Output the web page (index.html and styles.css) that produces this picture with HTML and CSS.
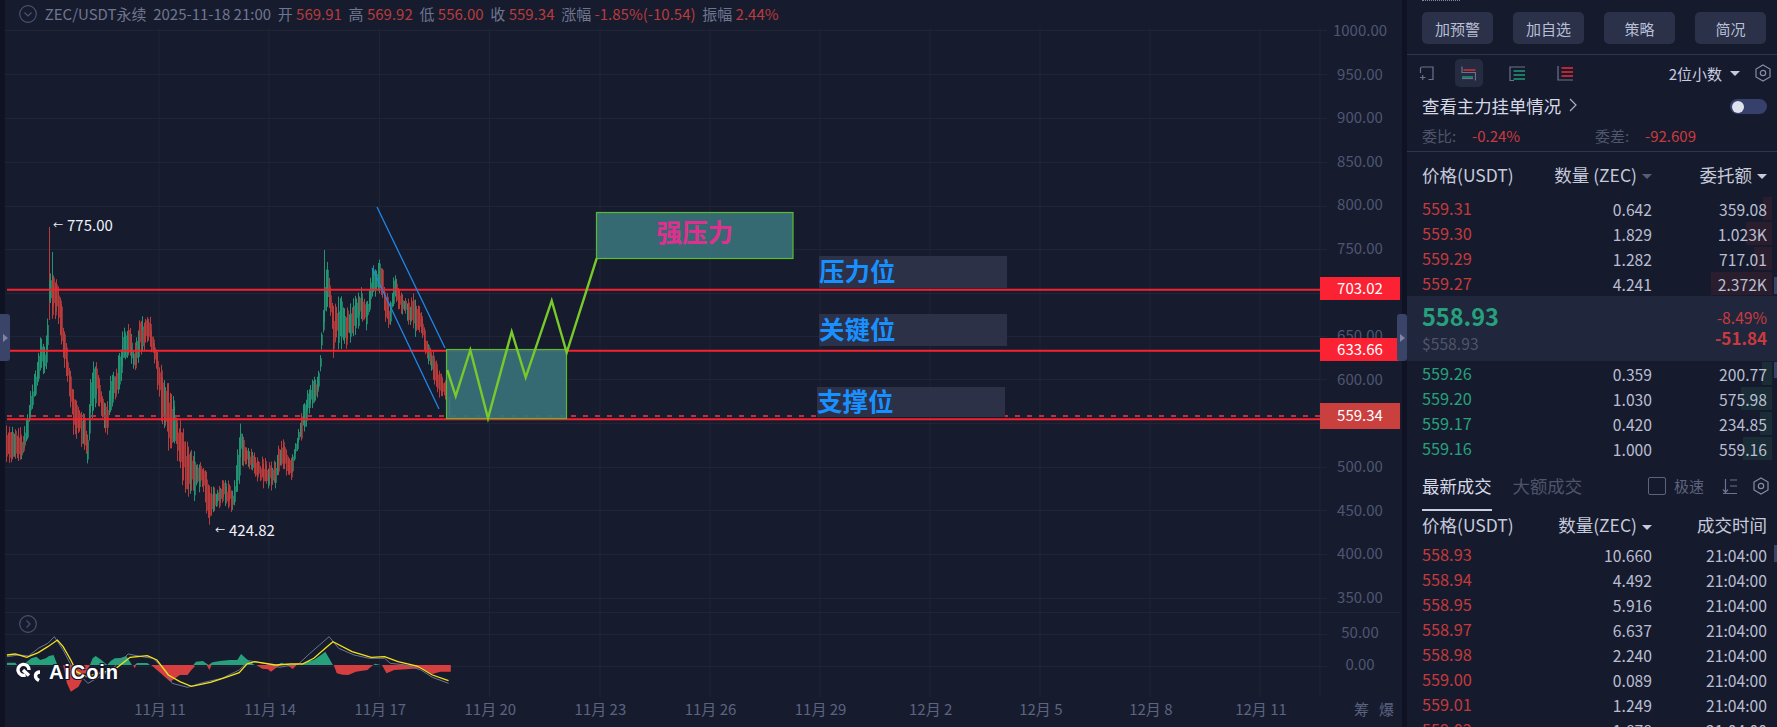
FILE: index.html
```html
<!DOCTYPE html>
<html lang="zh">
<head>
<meta charset="utf-8">
<title>ZEC/USDT永续</title>
<link rel="stylesheet" href="styles.css">
</head>
<body>
<main class="chart">
  <div class="plot">
    <svg class="canvas" viewBox="5 0 1397 697" width="1397" height="697">
      <g class="grid">
        <path d="M159 28V697M269 28V697M379.500 28V697M489.500 28V697M600 28V697M710 28V697M820 28V697M930 28V697M1040 28V697M1150 28V697M1260 28V697M1320 28V697"/>
        <path d="M5 30.500H1327M5 74.500H1327M5 118.500H1327M5 162.500H1327M5 206.500H1327M5 249.500H1327M5 293.500H1327M5 336.500H1327M5 379.500H1327M5 423.500H1327M5 467.500H1327M5 510.500H1327M5 554.500H1327M5 598.500H1327M5 612.500H1400M5 634.500H1327M5 666.500H1327M5 697.500H1400"/>
      </g>
      <path id="wick-up" class="wick-up"/>
      <path id="wick-down" class="wick-down"/>
      <path id="body-up" class="body-up"/>
      <path id="body-down" class="body-down"/>
      <path class="last-candle" d="M449.500 397V417"/>
      <path class="level-dash" d="M7 416H1320"/>
      <path class="level" d="M7 289.700H1320M10 350.700H1320M7 419.300H1320"/>
      <path class="trend" d="M377 207L445 348M372 268L439 409"/>
      <rect class="zone" x="446.500" y="349.500" width="120" height="69"/>
      <rect class="zone" x="596.500" y="212.500" width="196.500" height="46"/>
      <polyline class="path-line" points="447.300,370 455.700,396 470.300,350 488,418.300 511.700,331.700 525.700,377.300 551.700,300.700 566.700,352.700 596.700,258.300"/>
      <g transform="translate(0 590) scale(.3827 .3333)">
        <polygon class="hist-up" points="18,225 18,218 40,218 45,225 60,225 70,215 82,205 95,200 105,210 120,205 128,198 140,195 150,225"/>
        <polygon class="hist-up" points="235,225 242,205 250,198 265,210 280,225 290,212 300,205 315,204 330,198 345,225"/>
        <polygon class="hist-up" points="352,225 358,219 385,219 392,225"/>
        <polygon class="hist-up" points="505,225 512,215 530,213 545,225 555,217 575,213 600,210 620,210 630,192 642,205 650,212 665,225"/>
        <polygon class="hist-up" points="725,225 735,218 750,225"/>
        <polygon class="hist-up" points="785,225 805,214 820,210 835,198 850,185 860,205 870,225"/>
        <polygon class="hist-up" points="975,225 980,221 995,225"/>
        <polygon class="hist-down" points="165,225 175,280 185,305 205,290 220,258 235,225"/>
        <polygon class="hist-down" points="348,225 352,235 356,225"/>
        <polygon class="hist-down" points="395,225 420,250 445,275 470,255 490,255 500,240 510,228 505,225"/>
        <polygon class="hist-down" points="540,225 547,240 553,225"/>
        <polygon class="hist-down" points="670,225 685,236 700,238 708,245 720,235 735,225"/>
        <polygon class="hist-down" points="750,225 765,237 775,225"/>
        <polygon class="hist-down" points="872,225 880,250 895,254 910,255 930,245 960,240 975,225"/>
        <polygon class="hist-down" points="998,225 1010,250 1030,240 1060,238 1100,235 1130,252 1150,245 1178,245 1178,225"/>
        <polyline class="dif" vector-effect="non-scaling-stroke" points="18,200 50,195 75,198 100,175 125,160 142,140 165,180 190,235 230,280 290,240 335,192 370,200 400,205 430,240 450,280 490,292 530,278 580,265 625,240 650,212 700,222 730,232 780,222 810,190 835,165 860,140 885,175 925,195 965,205 1005,205 1020,220 1060,225 1100,240 1130,262 1172,280"/>
        <polyline class="dea" vector-effect="non-scaling-stroke" points="18,195 40,192 70,202 100,188 125,170 150,150 165,170 185,210 200,245 225,260 300,238 340,202 385,197 410,210 440,255 470,275 500,289 550,277 590,262 625,248 645,222 665,215 720,225 760,222 790,222 820,205 850,175 870,155 920,185 970,202 1005,200 1040,215 1090,228 1130,255 1172,272"/>
      </g>
      <path class="tick" d="M1320 415.700H1327"/>
    </svg>

    <div class="legend">
      <svg class="round-btn" width="18" height="18" viewBox="0 0 18 18"><circle cx="9" cy="9" r="8.300"/><path d="M5.500 7.500L9 11L12.500 7.500"/></svg>
      <span class="sym">ZEC/USDT永续</span>
      <span class="sym">2025-11-18 21:00</span>
      <span class="pair">开 <b>569.91</b></span>
      <span class="pair">高 <b>569.92</b></span>
      <span class="pair">低 <b>556.00</b></span>
      <span class="pair">收 <b>559.34</b></span>
      <span class="pair">涨幅 <b>-1.85%(-10.54)</b></span>
      <span class="pair">振幅 <b>2.44%</b></span>
    </div>

    <div class="yaxis">
      <span>1000.00</span><span>950.00</span><span>900.00</span><span>850.00</span><span>800.00</span><span>750.00</span><span>700.00</span><span>650.00</span><span>600.00</span><span>550.00</span><span>500.00</span><span>450.00</span><span>400.00</span><span>350.00</span>
      <span class="sub sub-first">50.00</span><span class="sub">0.00</span>
    </div>

    <div class="extreme extreme-high"><i>←</i>775.00</div>
    <div class="extreme extreme-low"><i>←</i>424.82</div>

    <div class="note note-strong">强压力</div>
    <div class="tag tag-press">压力位</div>
    <div class="tag tag-key">关键位</div>
    <div class="tag tag-support">支撑位</div>

    <div class="price-tag tag-703">703.02</div>
    <div class="price-tag tag-633">633.66</div>
    <div class="price-tag tag-559">559.34</div>

    <div class="handle handle-left"><i></i></div>
    <div class="handle handle-right"><i></i></div>

    <svg class="round-btn expand" width="18" height="18" viewBox="0 0 18 18"><circle cx="9" cy="9" r="8.300"/><path d="M7.500 5.500L11 9L7.500 12.500"/></svg>

    <div class="logo">
      <svg width="26" height="20" viewBox="0 0 26 20"><path class="logo-ring" d="M9.500 13A5.500 5.500 0 1 1 13 8"/><path class="logo-ring" d="M7 8L13 13.500"/><path class="logo-ring" d="M24 10C19 10 17.500 15.500 23 18.500"/></svg>
      <span>AiCoin</span>
    </div>
  </div>
  <div class="dates">
    <span>11月 11</span><span>11月 14</span><span>11月 17</span><span>11月 20</span><span>11月 23</span><span>11月 26</span><span>11月 29</span><span>12月 2</span><span>12月 5</span><span>12月 8</span><span>12月 11</span>
    <div class="date-tools"><em>筹</em><em>爆</em></div>
  </div>
</main>

<aside class="panel">
  <div class="stub"><i></i></div>
  <div class="actions">
    <button>加预警</button><button>加自选</button><button>策略</button><button>简况</button>
  </div>
  <div class="toolbar">
    <span class="tool"><svg width="15" height="15" viewBox="0 0 15 15"><path class="ic" d="M1.500 7V2.500Q1.500 1 3 1H14V13.500H9.500"/><path class="ic" d="M1 11.500H6.500M3.700 9V14"/></svg></span>
    <span class="tool tool-on"><svg width="15" height="15" viewBox="0 0 15 15"><path class="ic" d="M1 .5V6.500H14.500V14.500"/><path class="ic-red" d="M2.500 4H14.500"/><path class="ic" d="M1 12.500H12"/><path class="ic-green" d="M1 11H12"/></svg></span>
    <span class="tool"><svg width="16" height="15" viewBox="0 0 16 15"><path class="ic" d="M16 1H1V14.500H5"/><path class="ic-green" d="M4.500 5H16M4.500 9H16M4.500 13H16"/></svg></span>
    <span class="tool"><svg width="16" height="15" viewBox="0 0 16 15"><path class="ic" d="M1 0V14H16"/><path class="ic-red" d="M4.500 2H16M4.500 6H16M4.500 10H16"/></svg></span>
    <span class="decimals">2位小数<i class="caret caret-light"></i></span>
    <svg class="hex" width="16" height="18" viewBox="0 0 16 18"><path d="M8 1L15 5V13L8 17L1 13V5Z"/><circle cx="8" cy="9" r="2.700"/></svg>
  </div>
  <div class="mainforce">
    <span>查看主力挂单情况</span>
    <svg class="chev" width="8" height="14" viewBox="0 0 8 14"><path d="M1 1L7 7L1 13"/></svg>
    <span class="toggle"><i></i></span>
  </div>
  <div class="ratio">
    <span class="ratio-a">委比:</span><b class="ratio-av">-0.24%</b>
    <span class="ratio-b">委差:</span><b class="ratio-bv">-92.609</b>
  </div>

  <div class="row head book-head">
    <span>价格(USDT)</span>
    <span class="num">数量 (ZEC)<i class="caret"></i></span>
    <span class="num">委托额<i class="caret caret-light"></i></span>
  </div>
  <div class="row ask"><i class="depth" style="width:9px"></i><span>559.31</span><span class="num">0.642</span><span class="num">359.08</span></div>
  <div class="row ask"><i class="depth" style="width:26px"></i><span>559.30</span><span class="num">1.829</span><span class="num">1.023K</span></div>
  <div class="row ask"><i class="depth" style="width:18px"></i><span>559.29</span><span class="num">1.282</span><span class="num">717.01</span></div>
  <div class="row ask"><i class="depth" style="width:61px"></i><span>559.27</span><span class="num">4.241</span><span class="num">2.372K</span></div>

  <div class="mid">
    <div class="mid-left"><strong>558.93</strong><small>$558.93</small></div>
    <div class="mid-right"><span>-8.49%</span><strong>-51.84</strong></div>
  </div>

  <div class="row bid"><i class="depth" style="width:10px"></i><span>559.26</span><span class="num">0.359</span><span class="num">200.77</span></div>
  <div class="row bid"><i class="depth" style="width:31px"></i><span>559.20</span><span class="num">1.030</span><span class="num">575.98</span></div>
  <div class="row bid"><i class="depth" style="width:12px"></i><span>559.17</span><span class="num">0.420</span><span class="num">234.85</span></div>
  <div class="row bid"><i class="depth" style="width:29px"></i><span>559.16</span><span class="num">1.000</span><span class="num">559.16</span></div>

  <div class="tabs">
    <span class="tab tab-on">最新成交</span>
    <span class="tab">大额成交</span>
    <span class="check"></span>
    <span class="speed">极速</span>
    <svg class="sort" width="16" height="16" viewBox="0 0 16 16"><path d="M3.500 1V14M1 11.500L3.500 14.500L6 11.500M8 2H15M8 8H15M1 15.500H15"/></svg>
    <svg class="hex" width="16" height="18" viewBox="0 0 16 18"><path d="M8 1L15 5V13L8 17L1 13V5Z"/><circle cx="8" cy="9" r="2.700"/></svg>
  </div>

  <div class="row head trade-head">
    <span>价格(USDT)</span>
    <span class="num">数量(ZEC)<i class="caret caret-light"></i></span>
    <span class="num">成交时间</span>
  </div>
  <div class="row ask"><span>558.93</span><span class="num">10.660</span><span class="num">21:04:00</span></div>
  <div class="row ask"><span>558.94</span><span class="num">4.492</span><span class="num">21:04:00</span></div>
  <div class="row ask"><span>558.95</span><span class="num">5.916</span><span class="num">21:04:00</span></div>
  <div class="row ask"><span>558.97</span><span class="num">6.637</span><span class="num">21:04:00</span></div>
  <div class="row ask"><span>558.98</span><span class="num">2.240</span><span class="num">21:04:00</span></div>
  <div class="row ask"><span>559.00</span><span class="num">0.089</span><span class="num">21:04:00</span></div>
  <div class="row ask"><span>559.01</span><span class="num">1.249</span><span class="num">21:04:00</span></div>
  <div class="row ask"><span>559.02</span><span class="num">1.878</span><span class="num">21:04:00</span></div>

  <i class="thumb thumb-a"></i><i class="thumb thumb-b"></i><i class="thumb thumb-c"></i>
</aside>
<script src="chart.js"></script>
</body>
</html>
```
FILE: styles.css
```css
* { box-sizing: border-box; }
html, body { margin: 0; height: 100%; }
body {
  display: flex;
  width: 1777px;
  height: 727px;
  overflow: hidden;
  background: #0f1222;
  color: #b9bed1;
  font-family: "Noto Sans CJK SC", "Noto Sans", sans-serif;
  font-size: 15px;
}

/* chart */
.chart {
  width: 1397px;
  margin: 0 5px 0 5px;
  display: flex;
  flex-direction: column;
  background: #171b2e;
}
.plot {
  position: relative;
  height: 697px;
  display: flex;
  justify-content: flex-end;
}
.canvas { position: absolute; left: 0; top: 0; }
.grid path { fill: none; stroke: #1f2437; stroke-width: 1; }
.wick-up, .wick-down { fill: none; stroke-width: 1; }
.body-up, .body-down { fill: none; stroke-width: 1.500; }
.wick-up, .body-up { stroke: #239473; }
.wick-down, .body-down { stroke: #b93c3c; }
.last-candle { stroke: #9aa0ad; stroke-width: 1.5; fill: none; }
.level { stroke: #f8222f; stroke-width: 2; fill: none; }
.level-dash { stroke: #b5333c; stroke-width: 2; stroke-dasharray: 5 7; fill: none; }
.trend { stroke: #1f87e6; stroke-width: 1.3; fill: none; }
.zone { fill: #39717a; fill-opacity: .92; stroke: #58bd2e; stroke-width: 1.2; }
.path-line { fill: none; stroke: #78c92a; stroke-width: 2.4; }
.hist-up { fill: #26a17b; }
.hist-down { fill: #d63f3f; }
.dif { fill: none; stroke: #6b7490; stroke-width: 1; }
.dea { fill: none; stroke: #f3e31a; stroke-width: 1.3; }
.tick { stroke: #fff; stroke-width: 1.5; }

.legend {
  position: absolute;
  left: 14px;
  top: 5px;
  display: flex;
  align-items: center;
  gap: 6.700px;
  height: 18px;
  font-size: 15px;
  line-height: 18px;
  color: #6f7690;
  white-space: nowrap;
}
.legend b { font-weight: 400; color: #b83c3c; }
.legend .round-btn { margin-right: 1px; }
.round-btn circle, .round-btn path { fill: none; stroke: #4b5270; stroke-width: 1.2; }

.yaxis {
  width: 82px;
  padding: 8px 2px 0 0;
  display: flex;
  flex-direction: column;
  color: #4e5672;
  font-size: 15px;
  text-align: center;
  position: relative;
}
.yaxis span { height: 43.600px; line-height: 43.600px; }
.yaxis .sub { height: 32px; line-height: 32px; }
.yaxis .sub-first { margin-top: -2px; }

.extreme { position: absolute; color: #f0f2f8; font-size: 15px; line-height: 18px; white-space: nowrap; display: flex; align-items: center; }
.extreme i { font-style: normal; font-size: 10px; width: 14px; }
.extreme-high { left: 48px; top: 216px; }
.extreme-low { left: 210px; top: 521px; }

.note, .tag { position: absolute; font-weight: 700; font-size: 25.500px; white-space: nowrap; }
.note { left: 591.500px; top: 215px; width: 196.500px; text-align: center; color: #e0308f; line-height: 32px; }
.tag { height: 32px; width: 188px; background: #2c3147; color: #1890ff; line-height: 28px; }
.tag-press { left: 814px; top: 256px; }
.tag-key { left: 814px; top: 314px; }
.tag-support { left: 812px; top: 387px; height: 30px; line-height: 26px; }

.price-tag {
  position: absolute;
  left: 1315px;
  width: 80px;
  height: 23px;
  line-height: 21px;
  text-align: center;
  color: #fff;
  font-size: 15px;
  background: #fb2233;
}
.tag-703 { top: 277px; }
.tag-633 { top: 338px; }
.tag-559 { top: 403px; height: 26px; line-height: 23px; background: #c9403f; }

.handle {
  position: absolute;
  top: 314px;
  width: 10px;
  height: 47px;
  background: #3a4468;
  display: flex;
  align-items: center;
  justify-content: center;
}
.handle i {
  width: 0; height: 0;
  border-left: 5px solid #7d86a6;
  border-top: 4.500px solid transparent;
  border-bottom: 4.500px solid transparent;
}
.handle-left { left: -5px; border-radius: 0 3px 3px 0; }
.handle-right { left: 1392px; border-radius: 3px; z-index: 2; }

.expand { position: absolute; left: 14px; top: 615px; }

.logo {
  position: absolute;
  left: 11px;
  top: 660px;
  display: flex;
  align-items: center;
  gap: 7px;
  height: 24px;
}
.logo svg { filter: drop-shadow(0 0 1px #14172a); }
.logo span {
  font-family: "Liberation Sans", sans-serif;
  font-weight: 700;
  font-size: 20px;
  color: #fff;
  letter-spacing: .9px;
  text-shadow: -1px -1px 0 #14172a, 1px -1px 0 #14172a, -1px 1px 0 #14172a, 1px 1px 0 #14172a;
}
.logo-ring { fill: none; stroke: #fff; stroke-width: 3.400; }

.dates {
  height: 30px;
  display: flex;
  align-items: center;
  padding: 0 0 7px 100px;
  color: #5b6480;
  font-size: 15px;
}
.dates > span { width: 110.100px; text-align: center; white-space: nowrap; }
.date-tools { margin-left: auto; display: flex; gap: 10px; padding-right: 8px; }
.date-tools em { font-style: normal; }

/* side panel */
.panel {
  position: relative;
  width: 370px;
  height: 727px;
  overflow: hidden;
  background: #161a2d;
  flex: none;
}
.stub { height: 12px; padding-left: 15px; }
.stub i { display: block; width: 38px; border-top: 1px dotted #7f86a0; }
.actions {
  height: 43px;
  display: flex;
  gap: 20px;
  padding: 0 10px 0 15px;
  border-bottom: 1px solid #2f3550;
}
.actions button {
  width: 71px;
  height: 32px;
  padding: 0;
  border: 0;
  border-radius: 5px;
  background: #2a3148;
  color: #b8bfd6;
  font: inherit;
  font-size: 15px;
}
.toolbar {
  margin-top: 4px;
  height: 28px;
  display: flex;
  align-items: center;
  padding: 0 6px 0 5px;
}
.tool { width: 28px; height: 28px; display: flex; align-items: center; justify-content: center; border-radius: 5px; margin-right: 20px; }
.tool:first-child { margin-right: 14.500px; }
.tool-on { background: #252b40; }
.ic { fill: none; stroke: #6b7290; stroke-width: 1.2; }
.ic-red { fill: none; stroke: #ef2d36; stroke-width: 1.4; }
.ic-green { fill: none; stroke: #1f9c74; stroke-width: 1.4; }
.decimals { margin-left: auto; margin-right: 15px; color: #c8cde0; font-size: 15px; white-space: nowrap; display: flex; align-items: center; }
.caret {
  display: inline-block;
  width: 0; height: 0;
  margin-left: 5px;
  vertical-align: middle;
  border-left: 5px solid transparent;
  border-right: 5px solid transparent;
  border-top: 5px solid #565d78;
}
.caret-light { border-top-color: #c5cadb; }
.decimals .caret { margin-left: 8px; }
.hex path, .hex circle { fill: none; stroke: #868da8; stroke-width: 1.2; }

.mainforce {
  height: 36px;
  display: flex;
  align-items: center;
  padding: 0 10px 0 15px;
  color: #d5d9e6;
  font-size: 17.400px;
}
.chev { margin-left: 8px; }
.chev path { fill: none; stroke: #aab0c6; stroke-width: 1.2; }
.toggle { margin: 3px 0 0 auto; width: 37px; height: 15px; border-radius: 8px; background: #36406a; padding: 1.500px 0 0 2px; }
.toggle i { display: block; width: 12px; height: 12px; border-radius: 50%; background: #dfe2ec; }
.ratio {
  height: 29px;
  padding: 0 0 3px 15px;
  display: flex;
  align-items: center;
  border-bottom: 1px solid #2f3550;
  color: #4f556c;
  font-size: 15px;
}
.ratio b { font-weight: 400; color: #c93a3f; }
.ratio-a { width: 50px; }
.ratio-av { width: 123px; }
.ratio-b { width: 50px; }

.row {
  position: relative;
  display: grid;
  grid-template-columns: 115px 115px 115px;
  align-items: center;
  height: 25px;
  padding-left: 15px;
  font-size: 15.700px;
  white-space: nowrap;
}
.row span { position: relative; }
.num { text-align: right; }
.ask > span:first-of-type, .bid > span:first-of-type { font-size: 16.300px; margin-bottom: 2px; }
.ask > span:first-of-type { color: #c23a3c; }
.bid > span:first-of-type { color: #26a17b; }
.depth { position: absolute; right: 5px; top: 1px; bottom: 1px; }
.ask .depth { background: #2a1e2e; }
.bid .depth { background: #1a2d36; }
.head { color: #c5cadb; font-size: 17.500px; }
.book-head { height: 44px; }
.trade-head { height: 31px; padding-bottom: 4px; }

.mid {
  height: 65px;
  display: flex;
  justify-content: space-between;
  padding: 0 10px 0 15px;
  background: #20263b;
}
.mid-left strong { display: block; color: #26a17b; font-size: 23.500px; font-weight: 700; line-height: 28px; margin-top: 6px; }
.mid-left small { display: block; color: #4f556c; font-size: 15.700px; line-height: 22px; margin-top: 3px; }
.mid-right { text-align: right; color: #c93a3f; }
.mid-right span { display: block; font-size: 15.700px; line-height: 22px; margin-top: 11px; }
.mid-right strong { display: block; font-size: 17px; line-height: 24px; font-weight: 700; margin-top: -3px; }

.tabs {
  height: 50px;
  display: flex;
  align-items: flex-start;
  padding: 13px 8px 0 15px;
  font-size: 17.400px;
  line-height: 24px;
}
.tab { height: 37px; color: #4f556c; white-space: nowrap; margin-right: 21px; }
.tab-on { color: #d5d9e6; border-bottom: 2px solid #c9cfe0; }
.check { margin: 3px 8px 0 auto; width: 18px; height: 18px; border: 1px solid #5d637d; border-radius: 2px; }
.speed { color: #5d637d; font-size: 15px; }
.sort { margin: 4px 0 0 18px; }
.sort path { fill: none; stroke: #6b7290; stroke-width: 1.2; }
.tabs .hex { margin: 3px 0 0 15px; }

.thumb { position: absolute; right: 0; width: 3px; background: #3a4468; }
.thumb-a { top: 277px; height: 17px; }
.thumb-b { top: 362px; height: 16px; }
.thumb-c { top: 545px; height: 17px; }
```
FILE: chart.js
```js
// Draws the price candles from an envelope of [x, high, low] read off the chart.
(function () {
  var env = [[18,620,720],[40,615,730],[70,640,710],[85,560,640],[100,470,540],[122,310,460],[128,350,490],[140,350,450],[147,130,300],[158,130,290],[175,190,310],[190,320,430],[205,430,520],[220,510,650],[240,560,660],[262,600,770],[272,420,600],[290,430,570],[305,520,620],[318,560,655],[332,450,560],[350,430,550],[365,330,490],[382,300,410],[400,360,460],[420,295,400],[442,255,380],[465,370,430],[485,440,640],[505,500,690],[525,530,720],[550,630,810],[580,700,840],[605,720,800],[630,790,935],[650,800,870],[670,770,850],[700,790,880],[720,615,760],[745,680,750],[780,715,790],[820,720,815],[845,650,740],[870,720,780],[890,650,690],[910,540,640],[935,475,560],[955,440,520],[965,310,390],[973,130,290],[985,130,260],[1000,250,410],[1020,200,390],[1040,260,390],[1060,235,340],[1080,180,330],[1100,220,320],[1115,145,240],[1140,115,230],[1165,240,335],[1185,160,240],[1205,230,285],[1225,240,310],[1245,220,360],[1260,250,350],[1275,335,410],[1300,390,490],[1320,460,530],[1335,490,540]];
  var spikes = [[49.5,227,320,false],[52.5,252,316,true],[324.5,250,322,true]];
  var seed = 2025;
  function rnd() { seed = (seed * 16807) % 2147483647; return seed / 2147483647; }
  function at(x, k) {
    for (var i = 1; i < env.length; i++) {
      if (x <= env[i][0]) {
        var a = env[i - 1], b = env[i], t = (x - a[0]) / (b[0] - a[0]);
        return a[k] + (b[k] - a[k]) * t;
      }
    }
    return env[env.length - 1][k];
  }
  var paths = { wu: "", wd: "", bu: "", bd: "" };
  var fy = function (zy) { return (220 + zy / 3).toFixed(1); };
  for (var zx = 18; zx <= 1338; zx += 4.59) {
    var hi = at(zx, 1), lo = at(zx, 2), span = lo - hi;
    var top = hi + span * rnd() * 0.35 - rnd() * 12;
    var bot = lo - span * rnd() * 0.35 + rnd() * 12;
    var bTop = top + (bot - top) * (0.05 + rnd() * 0.25);
    var bBot = bot - (bot - top) * (0.05 + rnd() * 0.25);
    var prev = at(zx - 8, 1) + at(zx - 8, 2), next = at(zx + 8, 1) + at(zx + 8, 2);
    var up = rnd() + (prev - next) / 300 > 0.5;
    var x = Math.round(zx / 3) + 0.5;
    var w = "M" + x + " " + fy(top) + "V" + fy(bot);
    var b = "M" + (x + 0.5) + " " + fy(bTop) + "V" + fy(bBot);
    if (up) { paths.wu += w; paths.bu += b; } else { paths.wd += w; paths.bd += b; }
  }
  spikes.forEach(function (s) {
    var w = "M" + s[0] + " " + s[1] + "V" + s[2];
    if (s[3]) { paths.wu += w; } else { paths.wd += w; }
  });
  document.getElementById("wick-up").setAttribute("d", paths.wu);
  document.getElementById("wick-down").setAttribute("d", paths.wd);
  document.getElementById("body-up").setAttribute("d", paths.bu);
  document.getElementById("body-down").setAttribute("d", paths.bd);
})();
```
